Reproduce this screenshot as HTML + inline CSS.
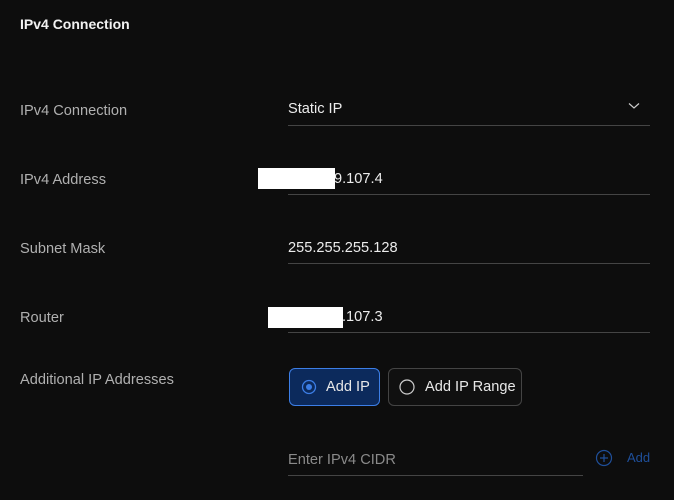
<!DOCTYPE html>
<html><head><style>
body{margin:0;width:674px;height:500px;background:#0d0d0d;font-family:"Liberation Sans",sans-serif;position:relative;overflow:hidden}
.a{position:absolute;white-space:nowrap}
.t{left:20px;top:16px;font-size:14px;font-weight:bold;color:#f2f2f2}
.l{left:20px;font-size:14.6px;color:#b0b0b0}
.v{left:288px;font-size:14.6px;color:#ececec}
.u{left:288px;width:362px;height:1px;background:#444}
.w{background:#fff}
.b{top:368px;height:38px;border-radius:6px;font-size:14.6px;color:#e8e8e8;box-sizing:border-box;display:flex;align-items:center}
</style></head><body>
<div class="a t">IPv4 Connection</div>
<div class="a l" style="top:103px">IPv4 Connection</div>
<div class="a v" style="top:101px">Static IP</div>
<svg class="a" style="left:628px;top:102px" width="12" height="8"><path d="M1 1.5L6 6L11 1.5" stroke="#ccc" fill="none" stroke-width="1.2"/></svg>
<div class="a u" style="top:125px"></div>
<div class="a l" style="top:172px">IPv4 Address</div>
<div class="a v" style="left:334px;top:171px">9.107.4</div>
<div class="a w" style="left:258px;top:168px;width:77px;height:21px"></div>
<div class="a u" style="top:194px"></div>
<div class="a l" style="top:241px">Subnet Mask</div>
<div class="a v" style="top:240px">255.255.255.128</div>
<div class="a u" style="top:263px"></div>
<div class="a l" style="top:310px">Router</div>
<div class="a v" style="left:342px;top:309px">.107.3</div>
<div class="a w" style="left:268px;top:307px;width:75px;height:21px"></div>
<div class="a u" style="top:332px"></div>
<div class="a l" style="top:372px">Additional IP Addresses</div>
<div class="a b" style="left:289px;width:91px;background:#0c2a5c;border:1px solid #3c7ee6;padding-left:11px">
<svg width="16" height="16" style="margin-right:9px"><circle cx="8" cy="8" r="6.5" stroke="#3c7ee6" stroke-width="1.3" fill="none"/><circle cx="8" cy="8" r="3" fill="#3c7ee6"/></svg>Add IP</div>
<div class="a b" style="left:388px;width:134px;background:#101010;border:1px solid #444;padding-left:10px">
<svg width="16" height="16" style="margin-right:10px"><circle cx="8" cy="8" r="7" stroke="#ccc" stroke-width="1.2" fill="none"/></svg>Add IP Range</div>
<div class="a" style="left:288px;top:452px;font-size:14.6px;color:#8a8a8a">Enter IPv4 CIDR</div>
<div class="a" style="left:288px;top:475px;width:295px;height:1px;background:#444"></div>
<svg class="a" style="left:595px;top:449px" width="18" height="18"><circle cx="9" cy="9" r="7.5" stroke="#1f4f9a" stroke-width="1.2" fill="none"/><path d="M9 5V13M5 9H13" stroke="#1f4f9a" stroke-width="1.2"/></svg>
<div class="a" style="left:627px;top:450px;font-size:13px;color:#1f4f9a">Add</div>
</body></html>
